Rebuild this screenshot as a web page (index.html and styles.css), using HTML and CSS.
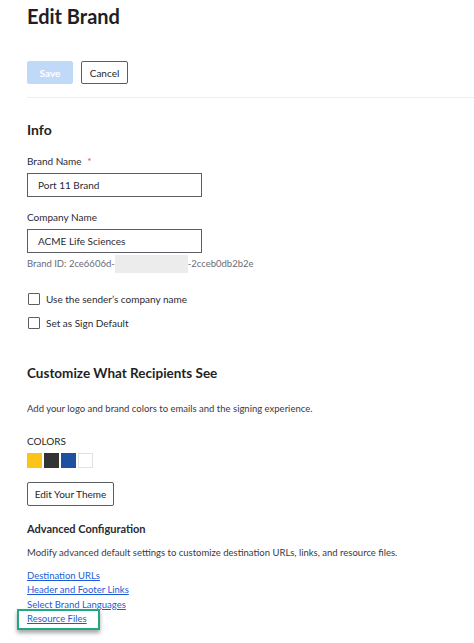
FILE: index.html
```html
<!DOCTYPE html>
<html>
<head>
<meta charset="utf-8">
<link rel="stylesheet" href="styles.css">
</head>
<body>
<div class="page">
  <h1 class="title">Edit Brand</h1>
  <div class="actions">
    <button class="btn btn-primary" disabled>Save</button>
    <button class="btn btn-secondary">Cancel</button>
  </div>
  <div class="divider"></div>

  <section class="info">
    <h2 class="section-title">Info</h2>
    <label class="field-label">Brand Name <span class="req">*</span></label>
    <div class="input">Port 11 Brand</div>
    <label class="field-label field-label-2">Company Name</label>
    <div class="input">ACME Life Sciences</div>
    <div class="brand-id">Brand ID: 2ce6606d-<span class="redact"></span>-2cceb0db2b2e</div>
    <div class="checks">
      <div class="check"><span class="box"></span><span>Use the sender’s company name</span></div>
      <div class="check"><span class="box"></span><span>Set as Sign Default</span></div>
    </div>
  </section>

  <section class="custom">
    <h2 class="section-title2">Customize What Recipients See</h2>
    <p class="desc">Add your logo and brand colors to emails and the signing experience.</p>
    <div class="colors-label">COLORS</div>
    <div class="swatches">
      <span class="sw sw-yellow"></span>
      <span class="sw sw-dark"></span>
      <span class="sw sw-blue"></span>
      <span class="sw sw-white"></span>
    </div>
    <button class="btn btn-secondary btn-theme">Edit Your Theme</button>
    <h3 class="sub-title">Advanced Configuration</h3>
    <p class="desc desc-adv">Modify advanced default settings to customize destination URLs, links, and resource files.</p>
    <div class="links">
      <a href="#" class="link">Destination URLs</a>
      <a href="#" class="link">Header and Footer Links</a>
      <a href="#" class="link">Select Brand Languages</a>
      <span class="highlight"><a href="#" class="link">Resource Files</a></span>
    </div>
  </section>
</div>
</body>
</html>
```

FILE: styles.css
```css
* { box-sizing: border-box; }
html, body { margin: 0; padding: 0; background: #fff; }
body {
  font-family: "Lato", "Noto Sans", sans-serif;
  color: #1f1f24;
  font-size: 10px;
}
.page {
  padding-left: 27px;
  overflow: hidden;
  height: 643px;
}
.title {
  margin: 4px 0 0 0;
  font-size: 20px;
  line-height: 24px;
  font-weight: 700;
  color: #1e1e26;
}
.actions {
  display: flex;
  gap: 8px;
  margin-top: 33px;
}
.btn {
  font-family: inherit;
  font-size: 10px;
  height: 23px;
  padding: 0 9px;
  border-radius: 2px;
  cursor: pointer;
}
.btn-primary {
  background: #c1d9f9;
  color: #fff;
  border: 1px solid #c1d9f9;
  width: 46px;
  font-weight: 700;
}
.btn-secondary {
  background: #fff;
  color: #1f1f24;
  border: 1px solid #5d5d66;
  width: 47px;
  padding: 0;
}
.divider {
  height: 1px;
  background: #eeeeee;
  margin-top: 13px;
}
.section-title {
  margin: 23px 0 0 0;
  font-size: 14px;
  line-height: 18px;
  font-weight: 700;
}
.field-label {
  display: block;
  margin-top: 16px;
  font-size: 10px;
  line-height: 12px;
  color: #2a2a33;
}
.field-label-2 { margin-top: 14px; }
.req { color: #e0457b; margin-left: 3px; }
.input {
  margin-top: 6px;
  width: 175px;
  height: 24px;
  border: 1px solid #5d5d66;
  padding: 0 10px;
  display: flex;
  align-items: center;
  font-size: 10px;
  color: #2a2a33;
}
.brand-id {
  display: flex;
  align-items: center;
  color: #6b6b73;
  font-size: 9.5px;
  height: 19px;
  margin-top: 1px;
}
.redact {
  display: inline-block;
  width: 73px;
  height: 18px;
  background: #ececec;
}
.checks {
  margin-top: 20px;
  display: flex;
  flex-direction: column;
  gap: 12px;
}
.check {
  display: flex;
  align-items: center;
  gap: 6px;
  font-size: 10px;
  color: #2a2a33;
  height: 12px;
}
.box {
  width: 12px;
  height: 12px;
  border: 1px solid #5d5d66;
  border-radius: 1px;
  margin-left: 1px;
}
.section-title2 {
  margin: 35px 0 0 0;
  font-size: 13.5px;
  line-height: 18px;
  font-weight: 700;
}
.desc {
  margin: 21px 0 0 0;
  font-size: 9.5px;
  line-height: 12px;
  color: #3a3a42;
}
.colors-label {
  margin-top: 20px;
  font-size: 10px;
  line-height: 12px;
  color: #1f1f24;
}
.swatches {
  display: flex;
  gap: 2px;
  margin-top: 6px;
}
.sw {
  width: 15px;
  height: 15px;
}
.sw-yellow { background: #fcc419; }
.sw-dark { background: #333333; }
.sw-blue { background: #1f4f9f; }
.sw-white { background: #fff; border: 1px solid #e2e2e2; }
.btn-theme {
  display: block;
  margin-top: 14px;
  width: 87px;
  height: 24px;
}
.sub-title {
  margin: 16px 0 0 0;
  font-size: 11px;
  line-height: 14px;
  font-weight: 700;
  color: #2a2a33;
}
.desc-adv { margin-top: 11px; }
.links {
  margin-top: 10px;
  display: flex;
  flex-direction: column;
  align-items: flex-start;
}
.link {
  color: #1d5bd6;
  font-size: 9.5px;
  line-height: 14.3px;
  text-decoration: underline;
}
.highlight {
  display: inline-block;
  margin-left: -10px;
  margin-top: -3px;
  padding: 1px 11px 2px 8px;
  border: 2px solid #1ea884;
  box-shadow: 0 3px 4px rgba(0,0,0,0.35);
}
```
